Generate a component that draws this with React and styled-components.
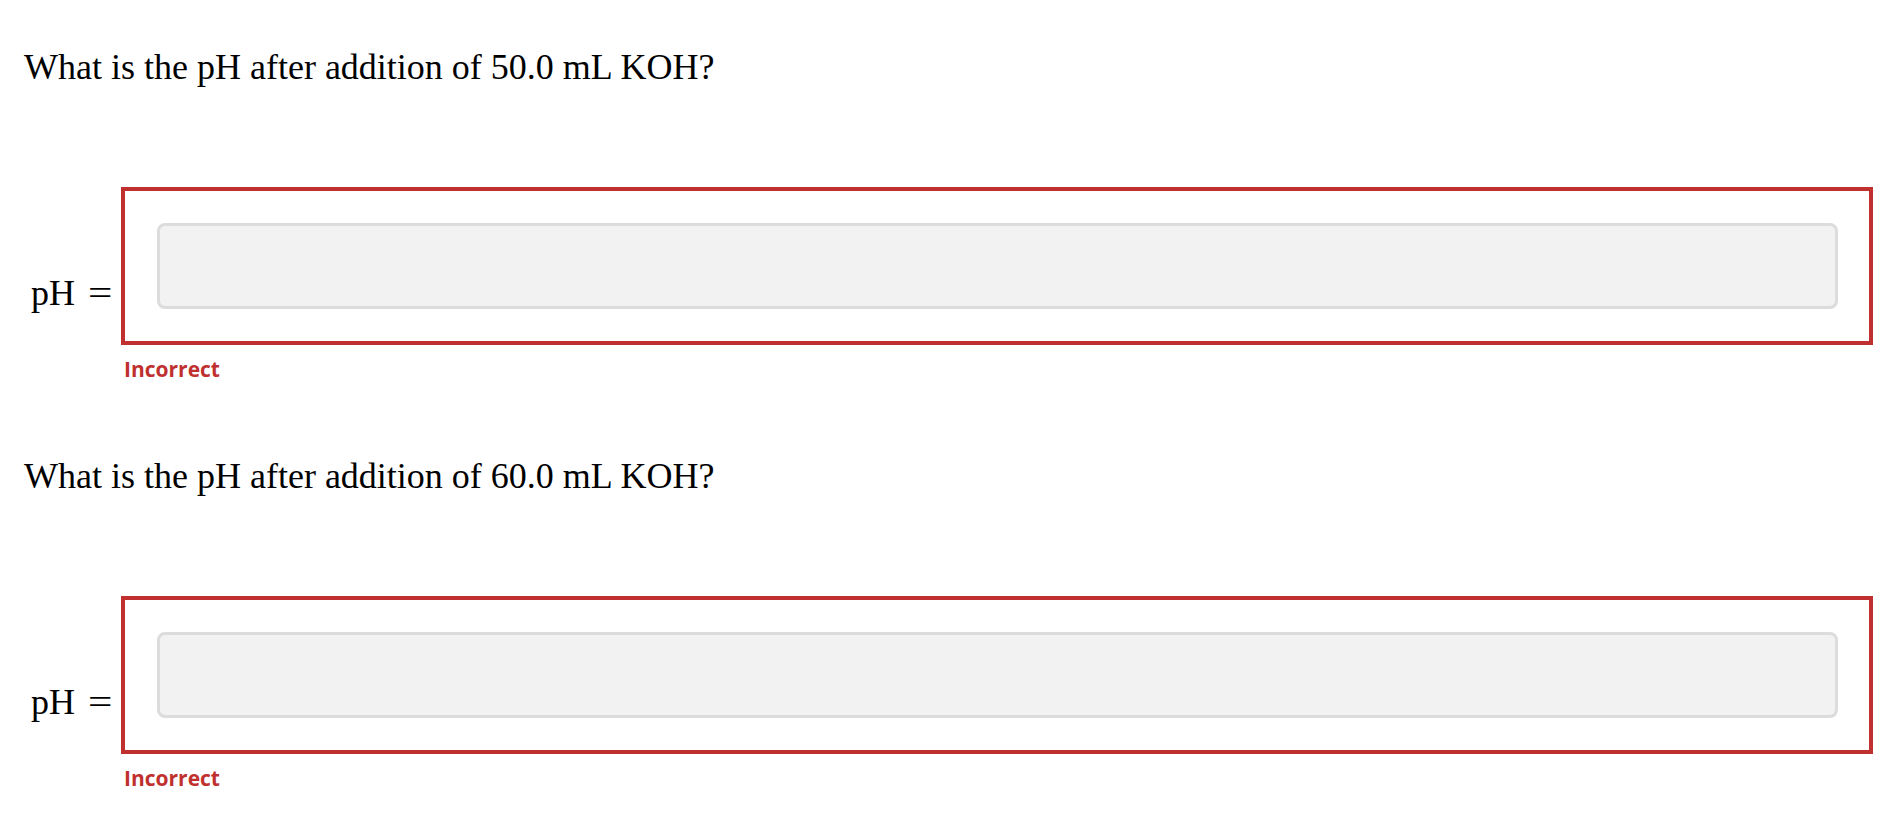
import React from 'react'
import styled, { createGlobalStyle } from 'styled-components'

const GlobalStyle = createGlobalStyle`
  body {
    margin: 0;
    background: #fff;
    font-family: "Liberation Serif", "Times New Roman", serif;
    color: #000;
  }
`

const Page = styled.div`
  padding: 46px 21px 0 24px;
`

const Block = styled.section`
  margin-bottom: 72px;
`

const Question = styled.p`
  margin: 0 0 99px;
  font-size: 36px;
  line-height: 42px;
`

const AnswerRow = styled.div`
  display: flex;
  align-items: flex-end;
`

const Label = styled.div`
  width: 97px;
  flex-shrink: 0;
  box-sizing: border-box;
  padding-left: 7px;
  margin-bottom: 34px;
  font-size: 36px;
  line-height: 36px;
  white-space: nowrap;
`

const Eq = styled.span`
  display: inline-block;
  margin-left: 15px;
  transform: scaleX(1.2);
`

const AnswerBox = styled.div`
  flex: 1;
  border: 4px solid ${p => (p.$wrong ? '#c0302e' : '#ccc')};
  padding: 32px 31px 32px 32px;
`

const Input = styled.input`
  display: block;
  width: 100%;
  box-sizing: border-box;
  height: 86px;
  border: 3px solid #dcdcdc;
  border-radius: 8px;
  background: #f2f2f2;
  font-size: 30px;
  padding: 0 16px;
  outline: none;
`

const Feedback = styled.div`
  margin: 10px 0 0 100px;
  font-family: "Open Sans", "Noto Sans", sans-serif;
  font-weight: 700;
  font-size: 21px;
  line-height: 28px;
  color: #c0302e;
`

const questions = [
  'What is the pH after addition of 50.0 mL KOH?',
  'What is the pH after addition of 60.0 mL KOH?',
]

export default function App() {
  return (
    <>
      <GlobalStyle />
      <Page>
        {questions.map(q => (
          <Block key={q}>
            <Question>{q}</Question>
            <AnswerRow>
              <Label>
                pH<Eq>=</Eq>
              </Label>
              <AnswerBox $wrong>
                <Input type="text" aria-label="pH" />
              </AnswerBox>
            </AnswerRow>
            <Feedback>Incorrect</Feedback>
          </Block>
        ))}
      </Page>
    </>
  )
}
